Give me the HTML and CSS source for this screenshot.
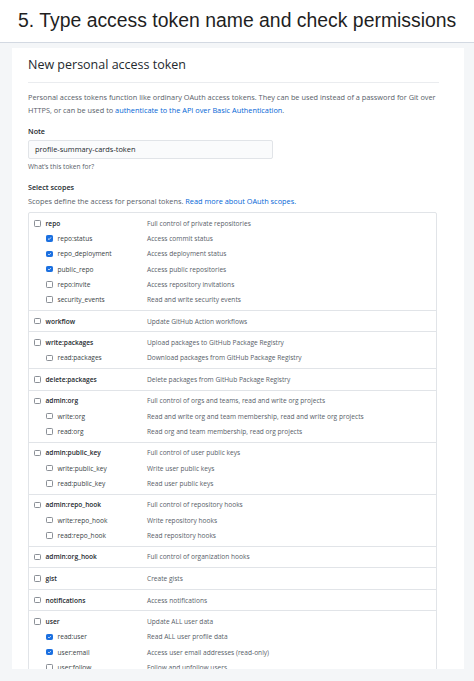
FILE: index.html
```html
<!DOCTYPE html>
<html lang="en">
<head>
<meta charset="utf-8">
<title>New personal access token</title>
<link rel="stylesheet" href="styles.css">
</head>
<body>
<div class="screen">
  <header class="title">5. Type access token name and check permissions</header>
  <main class="page">
    <section class="card">
      <h1 class="subhead">New personal access token</h1>
      <p class="intro">Personal access tokens function like ordinary OAuth access tokens. They can be used instead of a password for Git over HTTPS, or can be used to <a class="link" href="#">authenticate to the API over Basic Authentication</a>.</p>
      <div class="field">
        <div class="label">Note</div>
        <div class="input">profile-summary-cards-token</div>
        <div class="hint">What’s this token for?</div>
      </div>
      <div class="label">Select scopes</div>
      <p class="intro scopes-note">Scopes define the access for personal tokens. <a class="link" href="#">Read more about OAuth scopes.</a></p>
      <div class="scopes">
        <div class="group">
          <div class="row top"><span class="name"><span class="cb"></span>repo</span><span class="desc">Full control of private repositories</span></div>
          <div class="row sub"><span class="name"><span class="cb on"></span>repo:status</span><span class="desc">Access commit status</span></div>
          <div class="row sub"><span class="name"><span class="cb on"></span>repo_deployment</span><span class="desc">Access deployment status</span></div>
          <div class="row sub"><span class="name"><span class="cb on"></span>public_repo</span><span class="desc">Access public repositories</span></div>
          <div class="row sub"><span class="name"><span class="cb"></span>repo:invite</span><span class="desc">Access repository invitations</span></div>
          <div class="row sub"><span class="name"><span class="cb"></span>security_events</span><span class="desc">Read and write security events</span></div>
        </div>
        <div class="group">
          <div class="row top"><span class="name"><span class="cb"></span>workflow</span><span class="desc">Update GitHub Action workflows</span></div>
        </div>
        <div class="group">
          <div class="row top"><span class="name"><span class="cb"></span>write:packages</span><span class="desc">Upload packages to GitHub Package Registry</span></div>
          <div class="row sub"><span class="name"><span class="cb"></span>read:packages</span><span class="desc">Download packages from GitHub Package Registry</span></div>
        </div>
        <div class="group">
          <div class="row top"><span class="name"><span class="cb"></span>delete:packages</span><span class="desc">Delete packages from GitHub Package Registry</span></div>
        </div>
        <div class="group">
          <div class="row top"><span class="name"><span class="cb"></span>admin:org</span><span class="desc">Full control of orgs and teams, read and write org projects</span></div>
          <div class="row sub"><span class="name"><span class="cb"></span>write:org</span><span class="desc">Read and write org and team membership, read and write org projects</span></div>
          <div class="row sub"><span class="name"><span class="cb"></span>read:org</span><span class="desc">Read org and team membership, read org projects</span></div>
        </div>
        <div class="group">
          <div class="row top"><span class="name"><span class="cb"></span>admin:public_key</span><span class="desc">Full control of user public keys</span></div>
          <div class="row sub"><span class="name"><span class="cb"></span>write:public_key</span><span class="desc">Write user public keys</span></div>
          <div class="row sub"><span class="name"><span class="cb"></span>read:public_key</span><span class="desc">Read user public keys</span></div>
        </div>
        <div class="group">
          <div class="row top"><span class="name"><span class="cb"></span>admin:repo_hook</span><span class="desc">Full control of repository hooks</span></div>
          <div class="row sub"><span class="name"><span class="cb"></span>write:repo_hook</span><span class="desc">Write repository hooks</span></div>
          <div class="row sub"><span class="name"><span class="cb"></span>read:repo_hook</span><span class="desc">Read repository hooks</span></div>
        </div>
        <div class="group">
          <div class="row top"><span class="name"><span class="cb"></span>admin:org_hook</span><span class="desc">Full control of organization hooks</span></div>
        </div>
        <div class="group">
          <div class="row top"><span class="name"><span class="cb"></span>gist</span><span class="desc">Create gists</span></div>
        </div>
        <div class="group">
          <div class="row top"><span class="name"><span class="cb"></span>notifications</span><span class="desc">Access notifications</span></div>
        </div>
        <div class="group">
          <div class="row top"><span class="name"><span class="cb"></span>user</span><span class="desc">Update ALL user data</span></div>
          <div class="row sub"><span class="name"><span class="cb on"></span>read:user</span><span class="desc">Read ALL user profile data</span></div>
          <div class="row sub"><span class="name"><span class="cb on"></span>user:email</span><span class="desc">Access user email addresses (read-only)</span></div>
          <div class="row sub"><span class="name"><span class="cb"></span>user:follow</span><span class="desc">Follow and unfollow users</span></div>
        </div>
      </div>
    </section>
  </main>
</div>
</body>
</html>
```

FILE: styles.css
```css
* { box-sizing: border-box; }
html, body { margin: 0; padding: 0; }
body {
  width: 474px;
  height: 681px;
  overflow: hidden;
  background: #ffffff;
  font-family: "Open Sans", "Noto Sans", sans-serif;
  color: #24292e;
}
.screen {
  display: flex;
  flex-direction: column;
  height: 681px;
}
.title {
  height: 43px;
  flex: none;
  border-bottom: 1px solid #d3d9e2;
  font-family: "Liberation Sans", Arial, sans-serif;
  font-size: 19.4px;
  line-height: 41px;
  padding-left: 18px;
  color: #1f1f1f;
  white-space: nowrap;
}
.page {
  flex: 1;
  min-height: 0;
  background: #f4f6f8;
  padding: 5px 10px 12px 12px;
  display: flex;
}
.card {
  flex: 1;
  background: #ffffff;
  overflow: hidden;
  padding: 6px 16px 0 16px;
}
.subhead {
  margin: 0;
  width: 411px;
  font-size: 12.5px;
  font-weight: 400;
  line-height: 22px;
  padding-bottom: 6px;
  border-bottom: 1px solid #eaecef;
  color: #24292e;
}
.intro {
  margin: 8px 0 0 0;
  font-size: 7.35px;
  line-height: 13px;
  color: #586069;
}
.link { color: #0366d6; text-decoration: none; }
.field { margin-top: 8px; }
.label {
  font-size: 7.2px;
  font-weight: 600;
  line-height: 12px;
  color: #24292e;
}
.field .label { margin-bottom: 3px; }
.input {
  width: 245px;
  height: 19px;
  border: 1px solid #e1e4e8;
  border-radius: 2px;
  background: #fafbfc;
  font-size: 7.4px;
  line-height: 17px;
  padding-left: 6px;
  color: #24292e;
}
.hint {
  font-size: 6.6px;
  line-height: 10px;
  margin-top: 3px;
  margin-bottom: 9px;
  color: #586069;
}
.scopes-note { margin-top: 2px; }
.scopes {
  margin-top: 4px;
  width: 409px;
  border: 1px solid #e1e4e8;
  border-radius: 2px;
}
.group {
  padding: 2.65px 0;
  border-bottom: 1px solid #e1e4e8;
}
.row {
  display: grid;
  grid-template-columns: 118px 1fr;
  height: 15.25px;
  align-items: center;
  font-size: 6.6px;
  white-space: nowrap;
}
.name {
  display: flex;
  align-items: center;
  gap: 5px;
  color: #24292e;
}
.row.top .name { padding-left: 5px; font-weight: 600; }
.row.sub .name { padding-left: 17px; color: #3a3f45; }
.desc { color: #586069; }
.cb {
  flex: none;
  width: 6.5px;
  height: 6.5px;
  border: 0.8px solid #8a8f96;
  border-radius: 1.3px;
  background: #ffffff;
}
.cb.on {
  border-color: #1a6fe0;
  background: #1a6fe0 url("data:image/svg+xml,%3Csvg xmlns='http://www.w3.org/2000/svg' viewBox='0 0 10 10'%3E%3Cpath d='M2 5.2 L4.2 7.3 L8 2.8' fill='none' stroke='white' stroke-width='1.6'/%3E%3C/svg%3E") center / 100% 100% no-repeat;
}
```
